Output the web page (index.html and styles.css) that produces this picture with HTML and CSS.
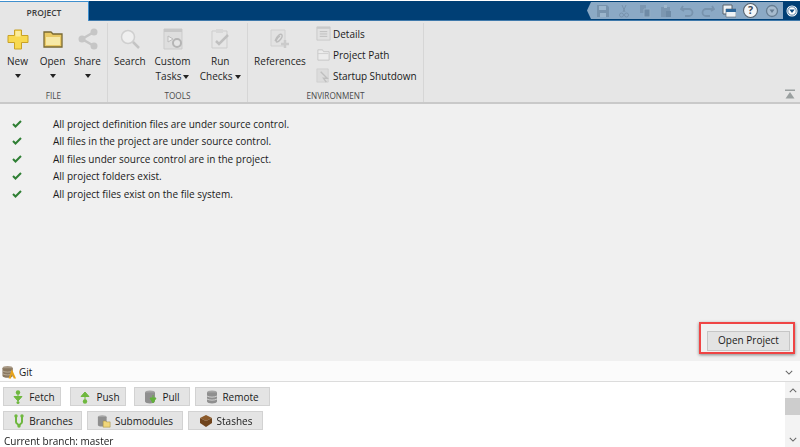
FILE: index.html
```html
<!DOCTYPE html>
<html lang="en">
<head>
<meta charset="utf-8">
<title>Project</title>
<link rel="stylesheet" href="styles.css">
</head>
<body>
<div class="app">
  <header class="titlebar">
    <div class="tab">PROJECT</div>
    <div class="title-spacer"></div>
    <div class="quick">
      <svg class="qa" viewBox="0 0 14 14"><path d="M1 1h10l2 2v10H1z" fill="#7893ad"/><path d="M3 2h7v4H3zM4 9h6v4H4z" fill="#9bb5cc"/></svg>
      <svg class="qa" viewBox="0 0 14 14"><path d="M9 1 6 8M5 1l3 7" stroke="#7893ad" fill="none"/><circle cx="4.500" cy="11" r="2" fill="none" stroke="#7893ad"/><circle cx="9.500" cy="11" r="2" fill="none" stroke="#7893ad"/></svg>
      <svg class="qa" viewBox="0 0 14 14"><path d="M2 1h6v8H2z" fill="#7c97b1"/><path d="M6 5h6v8H6z" fill="#6f8ba6" stroke="#94aec5"/></svg>
      <svg class="qa" viewBox="0 0 14 14"><path d="M2 3h9v10H2z" fill="#7c97b1"/><path d="M5 1h3v3H5z" fill="#9db6cc"/><path d="M7 7h5v6H7z" fill="#6f8ba6"/></svg>
      <svg class="qa" viewBox="0 0 14 14"><path d="M3 2 1 5l3 2M1.500 5H9a3 3 0 0 1 0 7H5" fill="none" stroke="#7893ad" stroke-width="1.800"/></svg>
      <svg class="qa" viewBox="0 0 14 14"><path d="m11 2 2 3-3 2M12.500 5H5a3 3 0 0 0 0 7h4" fill="none" stroke="#7893ad" stroke-width="1.800"/></svg>
      <svg class="qa" viewBox="0 0 14 14"><path d="M1 1h9v9H1z" fill="#eef2f5" stroke="#59636d"/><path d="M4 5h10v8H4z" fill="#eef2f5" stroke="#59636d" stroke-width=".6"/><path d="M4 5h10v3H4z" fill="#2d6699"/></svg>
      <svg class="qa help" viewBox="0 0 14 14"><circle cx="7" cy="7" r="6.500" fill="#f4f6f8" stroke="#54606c"/><text x="7" y="10.500" class="help-mark">?</text></svg>
      <svg class="qa" viewBox="0 0 14 14"><circle cx="7" cy="7" r="5.500" fill="#a6bbce" stroke="#667d92" stroke-width="1.300"/><path d="M4.500 5.500h5L7 9z" fill="#667d92"/></svg>
    </div>
    <div class="qa-menu"><svg viewBox="0 0 14 14"><circle cx="7" cy="7" r="5.500" fill="#fff"/><path d="M4.300 5.500h5.400L7 9z" fill="#0c4a80"/><circle cx="7" cy="7" r="4.200" fill="none" stroke="#0c4a80" stroke-width=".7"/></svg></div>
  </header>

  <section class="ribbon">
    <div class="group group-file">
      <div class="group-body">
        <div class="tool tool-new">
          <svg class="icon" viewBox="0 0 22 22"><path d="M7.500 2h7v5.500H21v7h-6.500V21h-7v-6.500H1v-7h6.500z" fill="#f8d950" stroke="#c9a227"/><path d="M8.500 3h5v5.500H8.500z" fill="#fcec9a"/></svg>
          <span>New</span><i class="caret"></i>
        </div>
        <div class="tool tool-open">
          <svg class="icon" viewBox="0 0 22 22"><path d="M2 4h7l2 2h9v13H2z" fill="#e9c964" stroke="#7a6a33" stroke-width="1.300"/><path d="M4 9h14v8H4z" fill="#f7e9a6"/></svg>
          <span>Open</span><i class="caret"></i>
        </div>
        <div class="tool tool-share">
          <svg class="icon" viewBox="0 0 22 22"><path d="M17 4 5 11l12 7" fill="none" stroke="#c6c6c6" stroke-width="2.500"/><circle cx="17" cy="4" r="3.500" fill="#c6c6c6"/><circle cx="5" cy="11" r="3.500" fill="#c6c6c6"/><circle cx="17" cy="18" r="3.500" fill="#c6c6c6"/></svg>
          <span>Share</span><i class="caret"></i>
        </div>
      </div>
      <div class="group-label">FILE</div>
    </div>

    <div class="group group-tools">
      <div class="group-body">
        <div class="tool tool-search">
          <svg class="icon" viewBox="0 0 22 22"><circle cx="9" cy="9" r="6.500" fill="#efefef" stroke="#cfcfcf" stroke-width="1.500"/><path d="m14 14 6 6" stroke="#c4c4c4" stroke-width="2.500"/></svg>
          <span>Search</span>
        </div>
        <div class="tool tool-custom">
          <svg class="icon" viewBox="0 0 22 22"><path d="M2 1h18v20H2z" fill="#dedede" stroke="#cbcbcb"/><path d="M2 1h18v3H2z" fill="#c8c8c8"/><path d="M6 8l5 3-5 3z" fill="#efefef" stroke="#bdbdbd"/><circle cx="15" cy="15" r="4" fill="#e5e5e5" stroke="#b5b5b5" stroke-width="2"/></svg>
          <span>Custom</span><span class="with-caret">Tasks<i class="caret inline"></i></span>
        </div>
        <div class="tool tool-run">
          <svg class="icon" viewBox="0 0 22 22"><path d="M3 3h15v17H3z" fill="#e6e6e6" stroke="#cdcdcd"/><path d="M7 1h7v4H7z" fill="#d8d8d8"/><path d="m7 13 3 3 9-9" fill="none" stroke="#c0c0c0" stroke-width="2.500"/></svg>
          <span>Run</span><span class="with-caret">Checks<i class="caret inline"></i></span>
        </div>
      </div>
      <div class="group-label">TOOLS</div>
    </div>

    <div class="group group-env">
      <div class="group-body">
        <div class="tool tool-ref">
          <svg class="icon" viewBox="0 0 22 22"><path d="M2 2h14v16H2z" fill="#e2e2e2" stroke="#d0d0d0"/><path d="M6 13c2-6 6-8 7-6s-3 7-5 7 0-4 3-6" fill="none" stroke="#bcbcbc" stroke-width="1.300"/><path d="M16 12v8M12 16h8" stroke="#cbcbcb" stroke-width="2.500"/></svg>
          <span>References</span>
        </div>
        <div class="env-list">
          <div class="env-row">
            <svg class="env-icon" viewBox="0 0 16 16"><path d="M1 1h14v14H1z" fill="#e2e2e2" stroke="#c9c9c9"/><path d="M1 1h14v2H1z" fill="#c9c9c9"/><path d="M4 6h8M4 8.500h8M4 11h8" stroke="#bcbcbc"/></svg>
            <span>Details</span>
          </div>
          <div class="env-row">
            <svg class="env-icon" viewBox="0 0 16 16"><path d="M2 3h5l1 2h6v9H2z" fill="#ececec" stroke="#c6c6c6"/><path d="M2 7h11" stroke="#cfcfcf"/></svg>
            <span>Project Path</span>
          </div>
          <div class="env-row">
            <svg class="env-icon" viewBox="0 0 16 16"><path d="M1 1h12v14H1z" fill="#dcdcdc" stroke="#d0d0d0"/><path d="m5 4 7 7H8l3 4" fill="none" stroke="#bfbfbf" stroke-width="1.500"/></svg>
            <span class="tight">Startup Shutdown</span>
          </div>
        </div>
      </div>
      <div class="group-label">ENVIRONMENT</div>
    </div>

    <div class="ribbon-fill">
      <svg class="collapse" viewBox="0 0 10 10"><path d="M0 .5h10v1.500H0z" fill="#9aa0a0"/><path d="M5 3 9.500 9.500h-9z" fill="#9aa0a0"/></svg>
    </div>
  </section>

  <main class="content">
    <ul class="checks">
      <li><svg class="tick" viewBox="0 0 10 8"><path d="m1 4 2.500 2.500L9 1" fill="none" stroke="#2f7f34" stroke-width="2"/></svg><span>All project definition files are under source control.</span></li>
      <li><svg class="tick" viewBox="0 0 10 8"><path d="m1 4 2.500 2.500L9 1" fill="none" stroke="#2f7f34" stroke-width="2"/></svg><span>All files in the project are under source control.</span></li>
      <li><svg class="tick" viewBox="0 0 10 8"><path d="m1 4 2.500 2.500L9 1" fill="none" stroke="#2f7f34" stroke-width="2"/></svg><span>All files under source control are in the project.</span></li>
      <li><svg class="tick" viewBox="0 0 10 8"><path d="m1 4 2.500 2.500L9 1" fill="none" stroke="#2f7f34" stroke-width="2"/></svg><span>All project folders exist.</span></li>
      <li><svg class="tick" viewBox="0 0 10 8"><path d="m1 4 2.500 2.500L9 1" fill="none" stroke="#2f7f34" stroke-width="2"/></svg><span>All project files exist on the file system.</span></li>
    </ul>
    <div class="actions">
      <button class="open-project">Open Project</button>
    </div>
  </main>

  <div class="git-head">
    <svg class="git-logo" viewBox="0 0 16 14"><ellipse cx="6" cy="3" rx="5.500" ry="2.500" fill="#a99a86"/><path d="M.5 3v8c0 3 11 3 11 0V3z" fill="#8a7860"/><path d="M1 6c2 1.500 8 1.500 10 0M1 9c2 1.500 8 1.500 10 0" fill="none" stroke="#c8bda9" stroke-width=".8"/><path d="M7 14 10.500 4 15 14h-2.500L10.500 9l-1 5z" fill="#e8a317"/></svg>
    <span class="git-title">Git</span>
    <svg class="chev" viewBox="0 0 10 6"><path d="m1 1 4 4 4-4" fill="none" stroke="#666" stroke-width="1.300"/></svg>
  </div>

  <section class="git-panel">
    <div class="git-main">
      <div class="git-row">
        <button class="git-btn w-fetch"><svg viewBox="0 0 12 14"><circle cx="6" cy="2.500" r="2.200" fill="#6fb83f"/><path d="M6 4v4M2 6.500 6 11l4-4.500z" fill="#6fb83f" stroke="#6fb83f"/><circle cx="6" cy="12.500" r="1.500" fill="#6fb83f"/></svg>Fetch</button>
        <button class="git-btn w-push"><svg viewBox="0 0 12 14"><path d="M6 10V4M2 6.500 6 2l4 4.500z" fill="#6fb83f" stroke="#6fb83f"/><circle cx="6" cy="11.500" r="2.200" fill="#6fb83f"/></svg>Push</button>
        <button class="git-btn w-pull"><svg class="wide" viewBox="0 0 14 14"><ellipse cx="6" cy="2.500" rx="5" ry="2" fill="#a5a5a5"/><path d="M1 2.500v9c0 2.500 10 2.500 10 0v-9z" fill="#8f8f8f"/><path d="M9 5v4M6 8l3 5 3-5z" fill="#62b13a" stroke="#62b13a"/></svg>Pull</button>
        <button class="git-btn w-remote"><svg viewBox="0 0 12 14"><ellipse cx="6" cy="2.500" rx="5" ry="2" fill="#a5a5a5"/><path d="M1 2.500v9c0 2.500 10 2.500 10 0v-9z" fill="#8f8f8f"/><path d="M1 6c2 1.500 8 1.500 10 0M1 9c2 1.500 8 1.500 10 0" fill="none" stroke="#d0d0d0"/></svg>Remote</button>
      </div>
      <div class="git-row">
        <button class="git-btn w-branches"><svg viewBox="0 0 12 14"><path d="M3 2v6c0 2 3 2 3 4M9 2v6c0 2-3 2-3 4" fill="none" stroke="#6fb83f" stroke-width="2"/><circle cx="3" cy="2" r="1.700" fill="#6fb83f"/><circle cx="9" cy="2" r="1.700" fill="#6fb83f"/><circle cx="6" cy="12" r="1.700" fill="#6fb83f"/></svg>Branches</button>
        <button class="git-btn w-sub"><svg class="wide" viewBox="0 0 16 14"><ellipse cx="6" cy="2.500" rx="5" ry="2" fill="#a5a5a5"/><path d="M1 2.500v9c0 2.500 10 2.500 10 0v-9z" fill="#8f8f8f"/><path d="M7 7h3l1 1h4v6H7z" fill="#f0d67a" stroke="#a18b3e" stroke-width=".6"/></svg>Submodules</button>
        <button class="git-btn w-stash"><svg class="wide" viewBox="0 0 14 14"><path d="M7 1 13 4 7 7 1 4z" fill="#8b5a2b"/><path d="M1 4v5l6 4 6-4V4L7 7z" fill="#70441c"/></svg>Stashes</button>
      </div>
      <div class="branch">Current branch: master</div>
    </div>
    <div class="scrollbar">
      <svg class="sb-arrow" viewBox="0 0 10 6"><path d="m1 5 4-4 4 4" fill="none" stroke="#666" stroke-width="1.300"/></svg>
      <div class="sb-thumb"></div>
      <svg class="sb-arrow sb-down" viewBox="0 0 10 6"><path d="m1 1 4 4 4-4" fill="none" stroke="#666" stroke-width="1.300"/></svg>
    </div>
  </section>

  <div class="highlight"></div>
</div>
</body>
</html>
```

FILE: styles.css
```css
* { box-sizing: border-box; }
html, body { margin: 0; padding: 0; }
body {
  width: 800px;
  height: 447px;
  overflow: hidden;
  background: #fff;
  font-family: "Open Sans", "Noto Sans", sans-serif;
  font-size: 10px;
  color: #1a1a1a;
}
.app {
  position: relative;
  width: 800px;
  height: 447px;
  display: flex;
  flex-direction: column;
  filter: blur(0.35px);
}

/* title bar */
.titlebar {
  height: 21px;
  flex: none;
  display: flex;
  align-items: stretch;
  background: #003f75;
  border-top: 1px solid #fff;
  border-bottom: 1px solid #3f79ab;
}
.tab {
  width: 89px;
  margin-bottom: -1px;
  background: #e6e6e6;
  border-top: 1px solid #3f8fce;
  border-right: 1px solid #3f8fce;
  text-align: center;
  font-size: 8.5px;
  font-weight: 600;
  line-height: 22px;
  color: #3c3c3c;
}
.title-spacer { flex: 1; }
.quick {
  width: 196px;
  margin: 1px 0;
  padding-left: 9px;
  display: flex;
  align-items: center;
  gap: 7px;
  background: #8ba9c5;
  clip-path: polygon(4px 0, 100% 0, 100% 100%, 4px 100%, 0 50%);
}
.qa { width: 14px; height: 14px; flex: none; }
.help { width: 15px; height: 15px; }
.help-mark { font-size: 10px; font-weight: 700; text-anchor: middle; fill: #3b4a57; }
.qa-menu { width: 17px; display: flex; align-items: center; justify-content: center; }
.qa-menu svg { width: 14px; height: 14px; }

/* ribbon */
.ribbon {
  height: 83px;
  flex: none;
  display: flex;
  background: #e6e6e6;
  border-bottom: 2px solid #c9c9c9;
}
.group {
  display: flex;
  flex-direction: column;
  border-right: 1px solid #d6d6d6;
  margin-top: 2px;
}
.group-file { width: 108px; }
.group-tools { width: 140px; }
.group-env { width: 176px; }
.group-body { flex: 1; display: flex; position: relative; }
.group-label {
  height: 13px;
  text-align: center;
  font-size: 8.2px;
  line-height: 13px;
  color: #4a4a4a;
}
.tool {
  display: flex;
  flex-direction: column;
  align-items: center;
  padding-top: 5px;
  line-height: 15px;
  color: #1f1f1f;
}
.tool .icon { width: 22px; height: 22px; margin-bottom: 4px; }
.tool-new { width: 35px; }
.tool-open { width: 35px; }
.tool-share { width: 35px; }
.tool-search { width: 44px; }
.tool-custom { width: 42px; }
.tool-run { width: 54px; }
.tool-ref { width: 64px; }
.caret {
  display: block;
  width: 0;
  height: 0;
  margin-top: 5px;
  border-left: 3.500px solid transparent;
  border-right: 3.500px solid transparent;
  border-top: 4px solid #222;
}
.caret.inline { display: inline-block; margin: 0 0 1px 2px; vertical-align: middle; }
.with-caret { white-space: nowrap; }
.env-list { display: flex; flex-direction: column; padding: 2px 0 0 4px; gap: 4px; }
.env-row { display: flex; align-items: center; gap: 2px; height: 17px; white-space: nowrap; }
.tight { letter-spacing: -.06px; }
.env-icon { width: 15px; height: 15px; flex: none; }
.ribbon-fill { flex: 1; display: flex; align-items: flex-end; justify-content: flex-end; padding: 0 5px 3px 0; }
.collapse { width: 10px; height: 10px; }

/* content */
.content {
  flex: 1;
  display: flex;
  flex-direction: column;
  background: #f0f0f0;
  min-height: 0;
}
.checks { list-style: none; margin: 0; padding: 11px 0 0 12px; }
.checks li { display: flex; align-items: center; height: 17.5px; }
.tick { width: 10px; height: 8px; flex: none; margin-right: 31px; }
.actions { margin-top: auto; padding: 0 10px 10px 0; display: flex; justify-content: flex-end; }
.open-project {
  width: 83px;
  height: 20px;
  padding: 0 0 2px;
  background: #e3e3e3;
  border: 1px solid #c6c6c6;
  font: inherit;
  color: #1a1a1a;
}

/* git */
.git-head {
  height: 21px;
  flex: none;
  display: flex;
  align-items: center;
  padding: 2px 7px 0 2px;
  background: #fbfbfb;
  border-bottom: 1px solid #dcdcdc;
}
.git-logo { width: 15px; height: 14px; margin-right: 2px; }
.git-title { flex: 1; }
.chev { width: 8px; height: 5px; }
.git-panel { height: 65px; flex: none; display: flex; background: #fff; }
.git-main { flex: 1; padding: 5px 0 0 3px; min-width: 0; }
.git-row { display: flex; height: 19px; margin-bottom: 5px; gap: 5px; }
.git-btn {
  height: 19px;
  padding: 0;
  display: flex;
  align-items: center;
  justify-content: center;
  gap: 4px;
  background: #e4e4e4;
  border: 1px solid #d2d2d2;
  font: inherit;
  color: #1a1a1a;
}
.git-btn svg { width: 12px; height: 14px; flex: none; }
.git-btn svg.wide { width: 14px; }
.w-fetch { width: 58px; margin-right: 4px; padding-left: 3px; gap: 5px; }
.w-push { width: 56px; margin-right: 3px; padding-left: 3px; gap: 5px; }
.w-pull { width: 56px; }
.w-remote { width: 75px; }
.w-branches { width: 79px; padding-left: 1px; }
.w-sub { width: 96px; }
.w-stash { width: 75px; }
.branch { margin: 3px 0 0 1px; line-height: 12px; white-space: nowrap; }
.scrollbar {
  width: 15px;
  flex: none;
  position: relative;
  background: #f3f3f3;
  display: flex;
  flex-direction: column;
  align-items: center;
  padding-top: 6px;
}
.sb-arrow { width: 8px; height: 5px; flex: none; }
.sb-thumb { width: 100%; height: 17px; margin-top: 5px; background: #cdcdcd; }
.sb-down { margin-top: auto; margin-bottom: 5px; }

/* red annotation, lying over the window */
.highlight {
  position: absolute;
  left: 699px;
  top: 322px;
  width: 96px;
  height: 32px;
  border: 2.5px solid #ef4444;
  box-shadow: 0 1px 3px rgba(0,0,0,.45);
}
```
